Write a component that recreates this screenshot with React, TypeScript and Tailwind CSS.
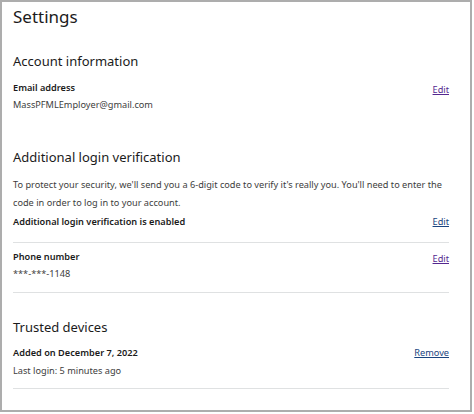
import React from "react";

function Item({
  label,
  value,
  action,
  actionClass,
  valueLeading = "leading-[16px]"
}: {
  label: string;
  value?: string;
  action: string;
  actionClass: string;
  valueLeading?: string;
}) {
  return (
    <div className="flex items-start justify-between">
      <div>
        <p className="text-[9.2px] leading-[18px] font-semibold text-[#1b1b1b]">{label}</p>
        {value && <p className={`text-[9.2px] ${valueLeading} text-[#3d3d3d]`}>{value}</p>}
      </div>
      <a href="#" className={`text-[9.2px] leading-[18px] underline ${actionClass}`}>
        {action}
      </a>
    </div>
  );
}

export default function App() {
  return (
    <div className="w-[474px] h-[414px] bg-white" style={{ fontFamily: '"Noto Sans", "Open Sans", sans-serif' }}>
      <div className="w-[472px] h-[412px] border-2 border-[#adadad] pl-[11px] pr-[21px] pt-[3px] text-[#1b1b1b]">
        <h1 className="text-[17px] leading-[24px]">Settings</h1>

        <h2 className="mt-[22px] text-[13px] leading-[20px]">Account information</h2>
        <div className="mt-[8px]">
          <Item label="Email address" value="MassPFMLEmployer@gmail.com" action="Edit" actionClass="mt-[2px] text-[#54278f]" />
        </div>

        <h2 className="mt-[34px] text-[13px] leading-[20px]">Additional login verification</h2>
        <p className="mt-[9px] text-[9.2px] leading-[18px] text-[#3d3d3d]">
          To protect your security, we'll send you a 6-digit code to verify it's really you. You'll need to enter the code in order to log in to your account.
        </p>
        <div className="mt-[1px] pb-[11px] border-b border-[#dfe1e2]">
          <Item label="Additional login verification is enabled" action="Edit" actionClass="text-[#1a4480]" />
        </div>
        <div className="pt-[5px] pb-[10px] border-b border-[#dfe1e2]">
          <Item label="Phone number" value="***-***-1148" action="Edit" actionClass="mt-[2px] text-[#54278f]" />
        </div>

        <h2 className="mt-[24px] text-[13px] leading-[20px]">Trusted devices</h2>
        <div className="mt-[7px] pb-[8px] border-b border-[#dfe1e2]">
          <Item
            label="Added on December 7, 2022"
            value="Last login: 5 minutes ago"
            action="Remove"
            actionClass="text-[#1a4480]"
            valueLeading="leading-[18px]"
          />
        </div>
      </div>
    </div>
  );
}
